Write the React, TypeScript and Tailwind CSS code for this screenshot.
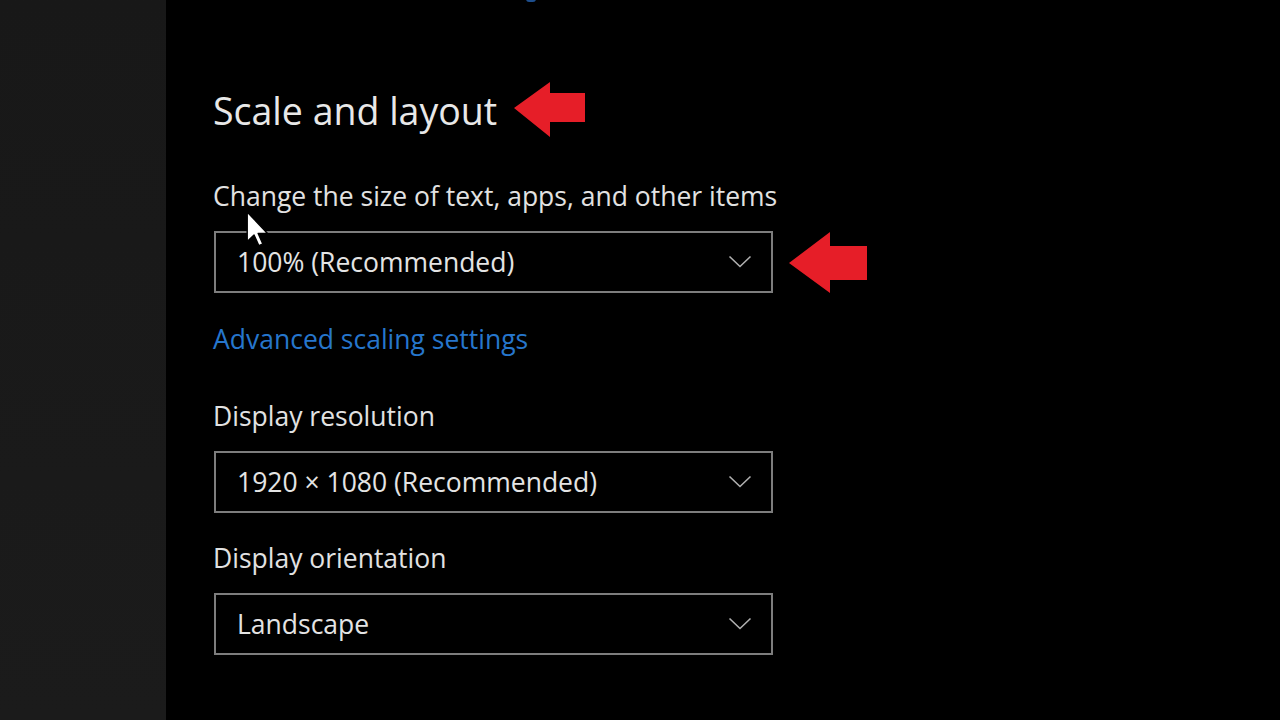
import React from "react";

const Chevron = () => (
  <svg width="24" height="14" viewBox="0 0 24 14" className="shrink-0">
    <polyline points="1.5,1.5 12,11.5 22.5,1.5" fill="none" stroke="#b0b0b0" strokeWidth="1.6" />
  </svg>
);

const Dropdown = ({ value }: { value: string }) => (
  <div className="flex h-[62px] w-[559px] items-center justify-between border-2 border-[#7d7d7d] pl-[21px] pr-[19px]">
    <span className="text-[26.5px] leading-none text-[#e4e4e4]">{value}</span>
    <Chevron />
  </div>
);

export default function App() {
  return (
    <div
      className="relative flex h-[720px] w-[1280px] overflow-hidden bg-black"
      style={{ fontFamily: '"Open Sans", "Noto Sans", sans-serif' }}
    >
      <div className="h-full w-[166px] shrink-0 bg-gradient-to-b from-[#181818] to-[#1b1b1b]" />
      <div className="flex flex-col pl-[47px] pt-[89px]">
        <div className="flex h-[44px] items-center">
          <h1 className="text-[37.5px] font-normal leading-none text-[#e8e8e8]">Scale and layout</h1>
        </div>
        <div className="mt-[48px] flex h-[30px] items-center text-[26.5px] leading-none text-[#e2e2e2]">
          Change the size of text, apps, and other items
        </div>
        <div className="ml-[1px] mt-[20px]">
          <Dropdown value="100% (Recommended)" />
        </div>
        <div className="mt-[31px] flex h-[30px] items-center text-[26.5px] leading-none text-[#2676cc]">
          Advanced scaling settings
        </div>
        <div className="mt-[47px] flex h-[30px] items-center text-[26.5px] leading-none text-[#e2e2e2]">
          Display resolution
        </div>
        <div className="ml-[1px] mt-[20px]">
          <Dropdown value="1920 × 1080 (Recommended)" />
        </div>
        <div className="mt-[30px] flex h-[30px] items-center text-[26.5px] leading-none text-[#e2e2e2]">
          Display orientation
        </div>
        <div className="ml-[1px] mt-[20px]">
          <Dropdown value="Landscape" />
        </div>
      </div>

      {/* blue fragment at top edge */}
      <div className="absolute left-[526px] top-[-4px] h-[6px] w-[10px] rounded-full bg-[#2a6fc9] opacity-70" />

      {/* red annotation arrows */}
      <svg className="absolute left-[514px] top-[82px]" width="72" height="56" viewBox="0 0 72 56">
        <polygon points="0,26 36,0 36,11 71,11 71,40 36,40 36,55" fill="#e61e28" />
      </svg>
      <svg className="absolute left-[789px] top-[232px]" width="79" height="62" viewBox="0 0 79 62">
        <polygon points="0,31 41,0 41,14 78,14 78,48 41,48 41,61" fill="#e61e28" />
      </svg>

      {/* mouse cursor */}
      <svg className="absolute left-[246px] top-[211px]" width="24" height="36" viewBox="0 0 13 20">
        <polygon
          points="0.5,0.5 0.5,17 4.3,13.4 7,19.3 9.2,18.3 6.6,12.5 11.8,12.5"
          fill="#ffffff"
          stroke="#000000"
          strokeWidth="0.8"
          strokeLinejoin="round"
        />
      </svg>
    </div>
  );
}
